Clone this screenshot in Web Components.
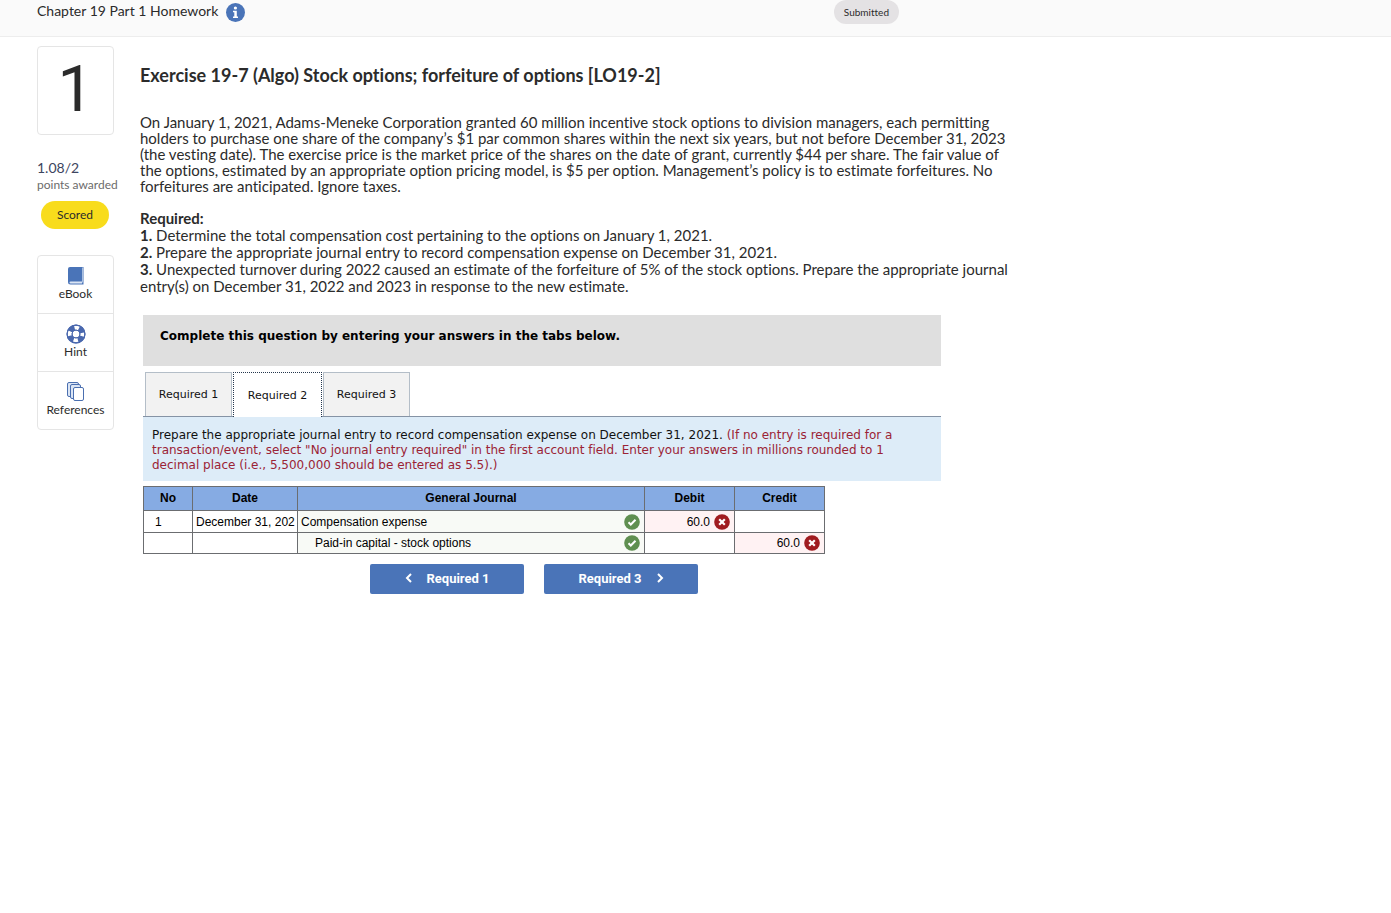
<!DOCTYPE html>
<html lang="en">
<head>
<meta charset="utf-8">
<title>Chapter 19 Part 1 Homework</title>
<style>
    body {
        margin: 0;
        background: #fff;
        color: #2b2b2b;
        font-family: Lato, sans-serif;
        font-variant-ligatures: none;
    }
</style>
</head>
<body>
<homework-page></homework-page>

<script>
const define = (name, html, setup) => {
    const template = document.createElement('template');
    template.innerHTML = html;

    customElements.define(name, class extends HTMLElement {
        constructor() {
            super();
            this.attachShadow({ mode: 'open' });
            this.shadowRoot.appendChild(template.content.cloneNode(true));
        }

        connectedCallback() {
            setup && setup(this, this.shadowRoot);
        }
    });
};

define('homework-header', `
    <style>
        :host {
            display: block;
            height: 36px;
            background: #fafafa;
            border-bottom: 1px solid #ededed;
        }
        header {
            display: flex;
            align-items: center;
            gap: 8px;
            max-width: 862px;
            height: 24px;
            margin-left: 37px;
        }
        h1 {
            margin: 0;
            padding-bottom: 2px;
            font-size: 14px;
            line-height: 20px;
            font-weight: 400;
        }
        button {
            width: 19px;
            height: 19px;
            padding: 0;
            border: 0;
            background: none;
        }
        svg {
            display: block;
        }
        .status {
            margin-left: auto;
            padding: 0 10px;
            border-radius: 12px;
            background: #e4e2e4;
            font-size: 10px;
            line-height: 24px;
        }
    </style>
    <header>
        <h1><slot></slot></h1>
        <button aria-label="Information">
            <svg width="19" height="19" viewBox="0 0 19 19">
                <circle cx="9.500" cy="9.500" r="9.500" fill="#4a74b8"/>
                <circle cx="9.400" cy="5" r="1.600" fill="#fff"/>
                <path d="M7 7.800h3.800v5.700h1.200v1.500H7v-1.500h1.300V9.300H7z" fill="#fff"/>
            </svg>
        </button>
        <span class="status"><slot name="status"></slot></span>
    </header>
`);

define('question-score', `
    <style>
        :host {
            display: block;
        }
        .number {
            box-sizing: border-box;
            height: 89px;
            border: 1px solid #e5e5e5;
            border-radius: 4px;
            font-family: Roboto, sans-serif;
            font-size: 64px;
            line-height: 86px;
            text-align: center;
        }
        .points {
            margin: 24px 0 8px;
            font-size: 12px;
            line-height: 17px;
            color: #6b6b6b;
            white-space: nowrap;
        }
        .points b {
            display: block;
            font-size: 14px;
            font-weight: 400;
            color: #3d4560;
        }
        .badge {
            margin: 0 5px 0 4px;
            border-radius: 14px;
            background: #f8dc1c;
            font-size: 12px;
            line-height: 28px;
            text-align: center;
        }
    </style>
    <div class="number"><slot name="number"></slot></div>
    <div class="points"><b><slot name="points"></slot></b>points awarded</div>
    <div class="badge"><slot name="badge"></slot></div>
`);

define('resource-link', `
    <style>
        :host {
            display: block;
            border-top: 1px solid #e5e5e5;
        }
        :host(:first-child) {
            border-top: 0;
        }
        a {
            display: flex;
            flex-direction: column;
            align-items: center;
            padding: 10px 0 12px;
            color: #2b2b2b;
            font-size: 12px;
            line-height: 15px;
            text-decoration: none;
        }
    </style>
    <a href="#"><slot name="icon"></slot><slot></slot></a>
`);

define('resource-list', `
    <style>
        nav {
            border: 1px solid #e5e5e5;
            border-radius: 4px;
        }
        svg {
            display: block;
        }
    </style>
    <nav>
        <resource-link>
            <svg slot="icon" width="20" height="20" viewBox="0 0 20 20">
                <path d="M4 1h13.500v17.500H4.500A2.500 2.500 0 0 1 2 16V3a2 2 0 0 1 2-2z" fill="#4a74b8"/>
                <path d="M4.500 15.500H16v2H4.500a1 1 0 0 1 0-2z" fill="#dbe5f4"/>
                <path d="M16.500 1.500v15" stroke="#a9bfe0"/>
            </svg>
            eBook
        </resource-link>
        <resource-link>
            <svg slot="icon" width="20" height="20" viewBox="0 0 20 20" fill="none">
                <circle cx="10" cy="10" r="6.500" stroke="#4a68ae" stroke-width="6"/>
                <circle cx="10" cy="10" r="6.300" stroke="#fff" stroke-width="4" stroke-dasharray="4.500 5.396" stroke-dashoffset="2.250"/>
                <circle cx="10" cy="10" r="8.900" stroke="#4a68ae" stroke-width="1.200"/>
                <circle cx="10" cy="10" r="4" stroke="#4a68ae" stroke-width="1"/>
            </svg>
            Hint
        </resource-link>
        <resource-link>
            <svg slot="icon" width="20" height="20" viewBox="0 0 20 20" stroke="#4a6fb0" stroke-width="1">
                <rect x="1.500" y="0.500" width="11" height="14" rx="1.500" fill="#dbe5f4"/>
                <rect x="4.500" y="2.500" width="10" height="14" rx="1.500" fill="#dbe5f4"/>
                <rect x="7.500" y="5.500" width="10" height="13" rx="1.500" fill="#fff"/>
            </svg>
            References
        </resource-link>
    </nav>
`);

define('question-text', `
    <style>
        :host {
            display: block;
            font-size: 15px;
        }
        h2 {
            margin: 0 0 27px;
            font-size: 18px;
            line-height: 24px;
            font-weight: 700;
        }
        p {
            margin: 0;
            line-height: 16px;
        }
        .required {
            margin-top: 16px;
            line-height: 17px;
        }
    </style>
    <h2>Exercise 19-7 (Algo) Stock options; forfeiture of options [LO19-2]</h2>
    <p>On January 1, 2021, Adams-Meneke Corporation granted 60 million incentive stock options to division managers, each permitting<br>
    holders to purchase one share of the company’s $1 par common shares within the next six years, but not before December 31, 2023<br>
    (the vesting date). The exercise price is the market price of the shares on the date of grant, currently $44 per share. The fair value of<br>
    the options, estimated by an appropriate option pricing model, is $5 per option. Management’s policy is to estimate forfeitures. No<br>
    forfeitures are anticipated. Ignore taxes.</p>
    <p class="required"><b>Required:</b><br>
    <b>1.</b> Determine the total compensation cost pertaining to the options on January 1, 2021.<br>
    <b>2.</b> Prepare the appropriate journal entry to record compensation expense on December 31, 2021.<br>
    <b>3.</b> Unexpected turnover during 2022 caused an estimate of the forfeiture of 5% of the stock options. Prepare the appropriate journal<br>
    entry(s) on December 31, 2022 and 2023 in response to the new estimate.</p>
`);

define('answer-tabs', `
    <style>
        :host {
            display: flex;
            gap: 2px;
            padding: 6px 2px 0;
            border-bottom: 1px solid #8593a5;
        }
        button {
            width: 87px;
            height: 44px;
            padding: 0;
            border: 1px solid #b4bec8;
            border-bottom: 0;
            background: #f2f2f2;
            color: #111;
            font: 11px "DejaVu Sans", sans-serif;
        }
        button[aria-selected="true"] {
            width: 89px;
            height: 45px;
            margin: 0 -1px -1px;
            border: 1px dotted #24364d;
            border-bottom: 0;
            background: #fff;
        }
    </style>
    <button role="tab" aria-selected="false">Required 1</button>
    <button role="tab" aria-selected="true">Required 2</button>
    <button role="tab" aria-selected="false">Required 3</button>
`, (host, root) => {
    const tabs = [...root.querySelectorAll('button')];
    tabs.forEach((tab) => tab.addEventListener('click', () => {
        tabs.forEach((other) => other.setAttribute('aria-selected', String(other === tab)));
    }));
});

define('answer-mark', `
    <style>
        :host {
            display: block;
            flex: none;
            width: 16px;
            height: 16px;
        }
        svg {
            display: block;
        }
        .wrong, :host([wrong]) .right {
            display: none;
        }
        :host([wrong]) .wrong {
            display: block;
        }
    </style>
    <svg class="right" width="16" height="16" viewBox="0 0 16 16">
        <circle cx="8" cy="8" r="7.800" fill="#5f8f50"/>
        <path d="M4.500 8.200l2.300 2.300 4.700-4.800" fill="none" stroke="#fff" stroke-width="2"/>
    </svg>
    <svg class="wrong" width="16" height="16" viewBox="0 0 16 16">
        <circle cx="8" cy="8" r="7.800" fill="#a01c20"/>
        <path d="M5.200 5.200l5.600 5.600M10.800 5.200l-5.600 5.600" stroke="#fff" stroke-width="2.200"/>
    </svg>
`);

define('journal-table', `
    <style>
        :host {
            display: block;
            margin-top: 5px;
        }
        table {
            width: 682px;
            table-layout: fixed;
            border-collapse: collapse;
            color: #000;
            font: 12px "Liberation Sans", Arial, sans-serif;
        }
        th, td {
            box-sizing: border-box;
            height: 21px;
            padding: 0 3px;
            border: 1px solid #6b6d70;
            overflow: hidden;
            white-space: nowrap;
            text-align: left;
        }
        th {
            height: 24px;
            padding-bottom: 2px;
            background: #86abe3;
            text-align: center;
        }
        tbody tr:first-child td {
            height: 22px;
        }
        td:first-child {
            padding-left: 11px;
        }
        .cell {
            display: flex;
            align-items: center;
            justify-content: space-between;
            padding-right: 1px;
        }
        .right {
            background: #f8faf6;
        }
        .wrong {
            background: #fff2f3;
        }
        .wrong .cell {
            justify-content: flex-end;
            gap: 4px;
        }
        .indent {
            padding-left: 14px;
        }
    </style>
    <table>
        <colgroup>
            <col style="width: 49px"><col style="width: 105px"><col><col style="width: 90px"><col style="width: 90px">
        </colgroup>
        <thead>
            <tr><th>No</th><th>Date</th><th>General Journal</th><th>Debit</th><th>Credit</th></tr>
        </thead>
        <tbody>
            <tr>
                <td>1</td>
                <td>December 31, 202</td>
                <td class="right"><div class="cell">Compensation expense<answer-mark></answer-mark></div></td>
                <td class="wrong"><div class="cell">60.0<answer-mark wrong></answer-mark></div></td>
                <td></td>
            </tr>
            <tr>
                <td></td>
                <td></td>
                <td class="right"><div class="cell"><span class="indent">Paid-in capital - stock options</span><answer-mark></answer-mark></div></td>
                <td></td>
                <td class="wrong"><div class="cell">60.0<answer-mark wrong></answer-mark></div></td>
            </tr>
        </tbody>
    </table>
`);

define('answer-panel', `
    <style>
        :host {
            display: block;
            max-width: 798px;
            margin: 20px 0 0 3px;
            font-family: "DejaVu Sans", sans-serif;
            font-size: 12px;
        }
        .banner {
            padding: 13px 17px 22px;
            background: #dfdfdf;
            color: #000;
            font-weight: 700;
            line-height: 16px;
        }
        .instructions {
            margin: 0;
            padding: 11px 9px 8px;
            background: #ddecf8;
            color: #111;
            line-height: 15px;
        }
        .instructions span {
            color: #9b2335;
        }
        .steps {
            display: flex;
            justify-content: center;
            gap: 20px;
            padding: 10px 16px 0 0;
        }
        .steps button {
            display: flex;
            align-items: center;
            justify-content: center;
            gap: 14px;
            width: 154px;
            height: 30px;
            padding: 0 0 2px;
            border: 0;
            border-radius: 2px;
            background: #4a74b8;
            color: #fff;
            font: 700 13px Roboto, sans-serif;
        }
        svg {
            fill: none;
            stroke: #fff;
            stroke-width: 2;
        }
    </style>
    <div class="banner">Complete this question by entering your answers in the tabs below.</div>
    <answer-tabs role="tablist"></answer-tabs>
    <p class="instructions">Prepare the appropriate journal entry to record compensation expense on December 31, 2021. <span>(If no entry is required for a<br>
    transaction/event, select "No journal entry required" in the first account field. Enter your answers in millions rounded to 1<br>
    decimal place (i.e., 5,500,000 should be entered as 5.5).)</span></p>
    <journal-table></journal-table>
    <div class="steps">
        <button><svg width="8" height="10" viewBox="0 0 8 10"><path d="M7 1L3 5l4 4"/></svg>Required 1</button>
        <button>Required 3<svg width="8" height="10" viewBox="0 0 8 10"><path d="M2 1l4 4-4 4"/></svg></button>
    </div>
`);

define('homework-page', `
    <style>
        :host {
            display: block;
        }
        .content {
            display: grid;
            grid-template-columns: 77px minmax(0, 1fr);
            gap: 26px;
            padding: 9px 37px;
        }
        aside {
            display: flex;
            flex-direction: column;
            gap: 26px;
        }
        main {
            padding-top: 17px;
        }
    </style>
    <homework-header>Chapter 19 Part 1 Homework<span slot="status">Submitted</span></homework-header>
    <div class="content">
        <aside>
            <question-score>
                <span slot="number">1</span>
                <span slot="points">1.08/2</span>
                <span slot="badge">Scored</span>
            </question-score>
            <resource-list></resource-list>
        </aside>
        <main>
            <question-text></question-text>
            <answer-panel></answer-panel>
        </main>
    </div>
`);
</script>
</body>
</html>
